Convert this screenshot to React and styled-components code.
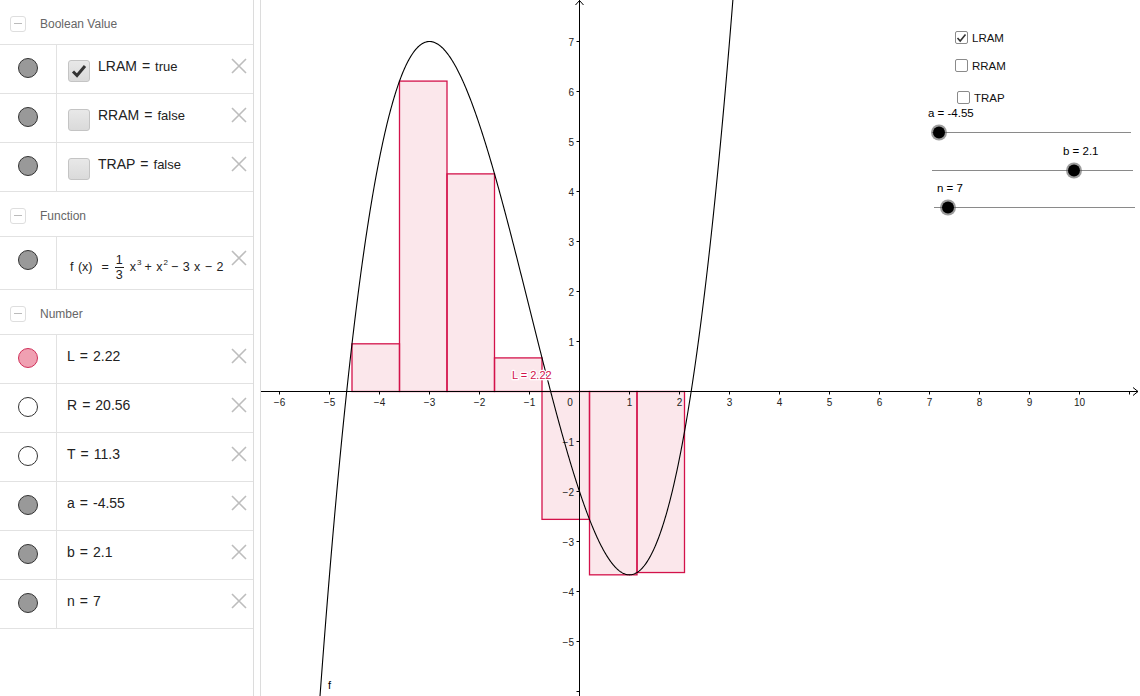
import React from 'react';
import styled, { createGlobalStyle } from 'styled-components';

const GlobalStyle = createGlobalStyle`
  html, body {
    margin: 0;
    padding: 0;
    background: #fff;
    font-family: 'Liberation Sans', Arial, sans-serif;
  }
`

const Page = styled.div`
  display: flex;
  width: 1140px;
  height: 696px;
  overflow: hidden;
  background: #fff;
`

/* ---------- algebra panel ---------- */

const Panel = styled.div`
  width: 253px;
  height: 100%;
  border-right: 1px solid #dcdcdc;
  display: flex;
  flex-direction: column;
`

const Splitter = styled.div`
  width: 6px;
  height: 100%;
  border-right: 1px solid #dcdcdc;
  background: #fff;
`

const GroupHeader = styled.div`
  height: 41px;
  padding-top: 3px;
  display: flex;
  align-items: center;
  padding-left: 10px;
  border-bottom: 1px solid #e2e2e2;
  font-size: 12px;
  color: #666;
`

const Toggle = styled.span`
  width: 14px;
  height: 14px;
  border: 1px solid #dedede;
  border-radius: 3px;
  margin-right: 14px;
  display: flex;
  align-items: center;
  justify-content: center;
  &::after {
    content: '';
    width: 8px;
    height: 1px;
    background: #bbb;
  }
`

const Row = styled.div`
  height: ${p => p.$h || 48}px;
  display: grid;
  grid-template-columns: 57px minmax(0, 1fr) 30px;
  border-bottom: 1px solid #e2e2e2;
`

const MarbleCell = styled.div`
  border-right: 1px solid #e2e2e2;
  display: flex;
  align-items: ${p => p.$top ? 'flex-start' : 'center'};
  padding-top: ${p => p.$top ? 13 : 0}px;
  padding-bottom: ${p => p.$top ? 0 : 2}px;
  justify-content: center;
`

const Marble = styled.span`
  width: 18px;
  height: 18px;
  border-radius: 50%;
  border: 1px solid ${p => p.$kind === 'pink' ? '#d0305a' : '#333'};
  background: ${p => p.$kind === 'pink' ? '#f0a0b2' : p.$kind === 'empty' ? '#fff' : '#999'};
`

const Content = styled.div`
  display: flex;
  align-items: center;
  padding-left: ${p => p.$pad || 10}px;
  padding-bottom: 6px;
  font-size: 14px;
  color: #222;
  white-space: nowrap;
`

const Eq = styled.span`
  margin: 0 5px;
`

const BoolBox = styled.span`
  width: 22px;
  height: 22px;
  box-sizing: border-box;
  border: 1px solid #c4c4c4;
  border-radius: 3px;
  background: linear-gradient(#e8e8e8, #dadada);
  margin-right: 8px;
  margin-top: 10px;
  display: flex;
  align-items: center;
  justify-content: center;
`

const Small = styled.span`
  font-size: 13px;
`

const Close = styled.div`
  padding-top: 13px;
  padding-left: 8px;
`

const Formula = styled.div`
  display: flex;
  align-items: center;
  padding-left: 13px;
  padding-top: 8px;
  font-size: 12.5px;
  color: #222;
  white-space: pre;
  word-spacing: 1px;
`

const Frac = styled.span`
  display: inline-flex;
  flex-direction: column;
  align-items: center;
  margin: 0 6px 0 6px;
  line-height: 14px;
  & > span:first-child {
    border-bottom: 1px solid #222;
    padding: 0 1px;
  }
`

const Sup = styled.span`
  font-size: 8px;
  position: relative;
  top: -5px;
  margin: 0 3px 0 1px;
`

const CloseX = () => (
  <svg width="16" height="16" viewBox="0 0 16 16">
    <path d="M1 1 L15 15 M15 1 L1 15" stroke="#bdbdbd" strokeWidth="1.6" />
  </svg>
)

const Check = () => (
  <svg width="16" height="14" viewBox="0 0 16 14">
    <path d="M2 7.5 L6 11.5 L14 2" stroke="#333" strokeWidth="3" fill="none" />
  </svg>
)

/* ---------- graphics view ---------- */

const Graphics = styled.div`
  position: relative;
  flex: 1;
  height: 100%;
  overflow: hidden;
`

const CanvasBox = styled.label`
  position: absolute;
  left: ${p => p.$x}px;
  top: ${p => p.$y}px;
  display: flex;
  align-items: center;
  gap: 4px;
  font-size: 11.5px;
  color: #111;
`

const Square = styled.span`
  width: 13px;
  height: 13px;
  box-sizing: border-box;
  border: 1px solid #8a8a8a;
  border-radius: 2px;
  background: #fff;
  display: flex;
  align-items: center;
  justify-content: center;
`

const f = x => x * x * x / 3 + x * x - 3 * x - 2
const X0 = 579.5
const Y0 = 391.5
const U = 50
const px = x => X0 + x * U
const py = y => Y0 - y * U

const a = -4.55, b = 2.1, n = 7
const dx = (b - a) / n
const rects = Array.from({ length: n }, (_, i) => {
  const x1 = a + i * dx
  let m = Infinity
  for (let k = 0; k <= 200; k++) m = Math.min(m, f(x1 + dx * k / 200))
  return { x1, h: m }
})

const curve = (() => {
  const pts = []
  for (let x = -5.5; x <= 3.3; x += 0.01) pts.push(`${px(x).toFixed(2)},${py(f(x)).toFixed(2)}`)
  return 'M' + pts.join(' L')
})()

const minus = k => (k < 0 ? '\u2212' + Math.abs(k) : String(k))

const sliders = [
  { label: 'a = -4.55', lx: 928, ly: 117, x1: 932, x2: 1131, y: 132.5, k: 939 },
  { label: 'b = 2.1', lx: 1063, ly: 155, x1: 932, x2: 1133, y: 170.5, k: 1074 },
  { label: 'n = 7', lx: 937, ly: 192, x1: 934, x2: 1135, y: 207.5, k: 948 },
]

const Plot = () => {
  const xs = []
  for (let k = -6; k <= 10; k++) if (k !== 0) xs.push(k)
  const ys = []
  for (let k = -5; k <= 7; k++) if (k !== 0) ys.push(k)
  return (
    <svg width="879" height="696" viewBox="261 0 879 696" style={{ display: 'block' }}>
      {rects.map((r, i) => {
        const left = px(r.x1), right = px(r.x1 + dx)
        const top = Math.min(py(r.h), Y0), bot = Math.max(py(r.h), Y0)
        return (
          <rect key={i} x={left} y={top} width={right - left} height={bot - top}
            fill="rgba(220,20,60,0.1)" stroke="#d3124a" strokeWidth="1.3" />
        )
      })}

      <g stroke="#000" strokeWidth="1" fill="none">
        <line x1="261" y1={Y0} x2="1138" y2={Y0} />
        <path d={`M1133 ${Y0 - 4} L1138 ${Y0} L1133 ${Y0 + 4}`} />
        <line x1={X0} y1="0" x2={X0} y2="696" />
        <path d={`M${X0 - 4} 5 L${X0} 0.5 L${X0 + 4} 5`} />
        {xs.concat([11]).map(k => <line key={'tx' + k} x1={px(k)} y1={Y0} x2={px(k)} y2={Y0 + 3} />)}
        {ys.concat([-6]).map(k => <line key={'ty' + k} x1={X0 - 3} y1={py(k)} x2={X0} y2={py(k)} />)}
      </g>

      <g fontFamily="'Liberation Sans', Arial, sans-serif" fontSize="10" fill="#222">
        {xs.map(k => <text key={'lx' + k} x={px(k)} y="406" textAnchor="middle">{minus(k)}</text>)}
        <text x="570" y="406" textAnchor="middle">0</text>
        {ys.map(k => <text key={'ly' + k} x="574" y={py(k) + 4} textAnchor="end">{minus(k)}</text>)}
      </g>

      <path d={curve} stroke="#000" strokeWidth="1.1" fill="none" />
      <text x="328" y="689" fontFamily="'Liberation Sans', Arial, sans-serif" fontSize="11" fill="#000">f</text>

      <text x="512" y="379" fontFamily="'Liberation Sans', Arial, sans-serif" fontSize="11" fill="#d3124a"
        stroke="#fff" strokeWidth="2.5" paintOrder="stroke" strokeLinejoin="round">L = 2.22</text>

      {sliders.map(s => (
        <g key={s.label}>
          <text x={s.lx} y={s.ly} fontFamily="'Liberation Sans', Arial, sans-serif" fontSize="11.5" fill="#000">{s.label}</text>
          <line x1={s.x1} y1={s.y} x2={s.x2} y2={s.y} stroke="#8a8a8a" strokeWidth="1" />
          <circle cx={s.k} cy={s.y} r="8" fill="rgba(90,90,90,0.6)" />
          <circle cx={s.k} cy={s.y} r="6" fill="#000" />
        </g>
      ))}
    </svg>
  )
}

const SmallCheck = () => (
  <svg width="11" height="10" viewBox="0 0 11 10">
    <path d="M1.5 5 L4.2 8 L9.5 1.5" stroke="#333" strokeWidth="1.6" fill="none" />
  </svg>
)

const boolRows = [
  { name: 'LRAM', val: 'true', on: true },
  { name: 'RRAM', val: 'false' },
  { name: 'TRAP', val: 'false' },
]

const numRows = [
  { name: 'L', val: '2.22', kind: 'pink' },
  { name: 'R', val: '20.56', kind: 'empty' },
  { name: 'T', val: '11.3', kind: 'empty' },
  { name: 'a', val: '-4.55' },
  { name: 'b', val: '2.1' },
  { name: 'n', val: '7' },
]

export default function App() {
  return (
    <>
      <GlobalStyle />
      <Page>
        <Panel>
          <GroupHeader><Toggle />Boolean Value</GroupHeader>
          {boolRows.map(r => (
            <Row key={r.name}>
              <MarbleCell><Marble /></MarbleCell>
              <Content $pad={11}>
                <BoolBox>{r.on && <Check />}</BoolBox>
                <span>{r.name}<Eq>=</Eq><Small>{r.val}</Small></span>
              </Content>
              <Close><CloseX /></Close>
            </Row>
          ))}

          <GroupHeader><Toggle />Function</GroupHeader>
          <Row $h={52}>
            <MarbleCell $top><Marble /></MarbleCell>
            <Formula>
              {'f (x)  ='}
              <Frac><span>1</span><span>3</span></Frac>
              {'x'}<Sup>3</Sup>{'+ x'}<Sup>2</Sup>{'− 3 x − 2'}
            </Formula>
            <Close><CloseX /></Close>
          </Row>

          <GroupHeader><Toggle />Number</GroupHeader>
          {numRows.map(r => (
            <Row key={r.name}>
              <MarbleCell><Marble $kind={r.kind} /></MarbleCell>
              <Content>{r.name}<Eq>=</Eq>{r.val}</Content>
              <Close><CloseX /></Close>
            </Row>
          ))}
        </Panel>
        <Splitter />
        <Graphics>
          <Plot />
          <CanvasBox $x={694} $y={31}><Square><SmallCheck /></Square>LRAM</CanvasBox>
          <CanvasBox $x={694} $y={59}><Square />RRAM</CanvasBox>
          <CanvasBox $x={696} $y={91}><Square />TRAP</CanvasBox>
        </Graphics>
      </Page>
    </>
  )
}
